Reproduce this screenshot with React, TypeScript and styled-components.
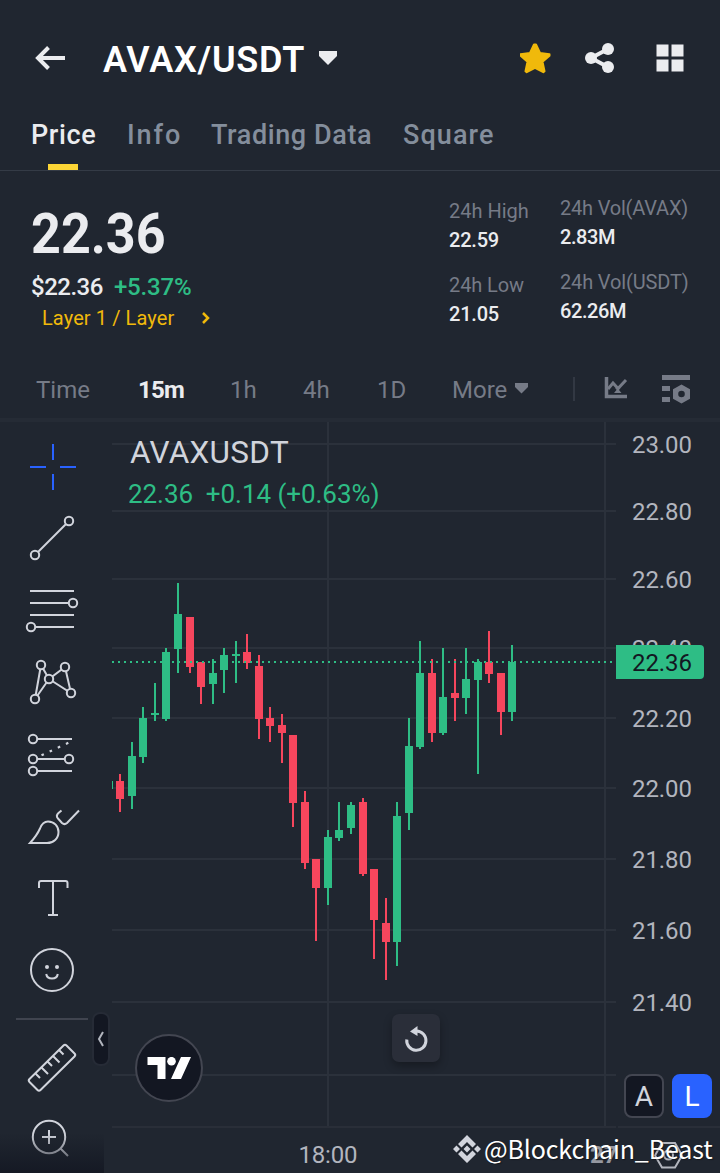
import React from "react";
import styled, { createGlobalStyle } from "styled-components";

const Global = createGlobalStyle`
  * { box-sizing: border-box; }
  body { margin: 0; background: #202630; font-family: Roboto, sans-serif; }
`;

const Page = styled.div`
  width: 720px;
  height: 1173px;
  overflow: hidden;
  background: #202630;
  display: flex;
  flex-direction: column;
  position: relative;
`;

const Label = styled.span<{ $size: number; $color?: string; $weight?: number; $track?: number; $family?: string }>`
  font-family: ${(p) => p.$family ?? "Roboto"}, sans-serif;
  font-size: ${(p) => p.$size}px;
  font-weight: ${(p) => p.$weight ?? 400};
  color: ${(p) => p.$color ?? "#ebecef"};
  letter-spacing: ${(p) => p.$track ?? 0}px;
  white-space: nowrap;
  line-height: 1.2;
`;

const LastPrice = styled(Label)`
  transform: scaleX(0.93);
  transform-origin: left;
`;

const Header = styled.header`
  height: 108px;
  padding: 8px 35px 0;
  display: flex;
  align-items: center;
`;
const Pair = styled.div`
  display: flex;
  align-items: center;
  gap: 14px;
  margin-left: 38px;
  flex: 1;
  ${Label} { padding-top: 5px; }
`;
const Actions = styled.div`
  display: flex;
  align-items: center;
  gap: 34px;
`;

const Tabs = styled.nav`
  height: 63px;
  border-bottom: 1px solid #343b46;
  padding-left: 31px;
  display: flex;
`;
const Tab = styled.div<{ $width: number; $active?: boolean }>`
  width: ${(p) => p.$width}px;
  height: 62px;
  padding-top: 11px;
  display: flex;
  flex-direction: column;
  justify-content: space-between;
  &::after {
    content: "";
    width: 30px;
    height: 6px;
    margin-left: 17px;
    background: ${(p) => (p.$active ? "#fcd535" : "transparent")};
  }
`;

const Summary = styled.section`
  height: 189px;
  padding-left: 31px;
  display: flex;
`;
const PriceBlock = styled.div`
  width: 418px;
  padding-top: 30px;
  display: flex;
  flex-direction: column;
  align-items: flex-start;
`;
const Row = styled.div<{ $gap: number; $top?: number; $left?: number }>`
  display: flex;
  align-items: center;
  gap: ${(p) => p.$gap}px;
  margin-top: ${(p) => p.$top ?? 0}px;
  margin-left: ${(p) => p.$left ?? 0}px;
`;
const StatColumn = styled.div<{ $width: number; $top: number }>`
  width: ${(p) => p.$width}px;
  padding-top: ${(p) => p.$top}px;
  display: flex;
  flex-direction: column;
  gap: 16px;
`;
const Stat = styled.div`
  height: 58px;
  display: flex;
  flex-direction: column;
  gap: 5px;
`;

const Intervals = styled.nav`
  height: 60px;
  padding-left: 36px;
  display: flex;
  align-items: center;
  border-bottom: 2px solid #252b35;
`;
const Interval = styled.div<{ $width: number }>`
  width: ${(p) => p.$width}px;
  display: flex;
  align-items: center;
  gap: 8px;
  ${Label} { padding-top: 2px; }
`;
const Divider = styled.div`
  width: 2px;
  height: 24px;
  background: #323843;
  margin-right: 29px;
`;
const IntervalIcons = styled.div`
  display: flex;
  align-items: center;
  gap: 34px;
`;

const Workspace = styled.main`
  height: 753px;
  display: flex;
  border-top: 2px solid #252b35;
`;
const Tools = styled.aside`
  width: 104px;
  height: 753px;
  padding-top: 9px;
  display: flex;
  flex-direction: column;
  position: relative;
  &::after {
    content: "";
    position: absolute;
    left: 0;
    right: 0;
    bottom: 2px;
    height: 40px;
    background: linear-gradient(rgba(19, 23, 34, 0), rgba(19, 23, 34, 0.85));
  }
`;
const ToolRule = styled.hr`
  width: 72px;
  height: 2px;
  margin: 11px 0 11px 16px;
  border: 0;
  flex: none;
  background: #40444f;
`;
const ToolIcon = styled.svg`
  display: block;
  flex: none;
  fill: none;
  stroke: #d1d4dc;
  stroke-width: 2;
`;
const ChartPane = styled.section`
  width: 616px;
  position: relative;
  svg { display: block; }
`;
const Legend = styled.div`
  position: absolute;
  left: 24px;
  top: 12px;
  display: flex;
  flex-direction: column;
  gap: 7px;
  ${Label}:first-child { padding-left: 2px; }
`;
const Collapse = styled.button`
  position: absolute;
  left: 92px;
  top: 1012px;
  width: 18px;
  height: 54px;
  padding: 0;
  border: 2px solid #262b36;
  border-radius: 8px;
  background: #131722;
  display: grid;
  place-items: center;
`;
const Brand = styled.div`
  position: absolute;
  left: 135px;
  top: 1034px;
  width: 68px;
  height: 68px;
  border: 2px solid #434651;
  border-radius: 50%;
  background: #131722;
  display: grid;
  place-items: center;
`;
const ResetButton = styled.button`
  position: absolute;
  left: 392px;
  top: 1014px;
  width: 48px;
  height: 48px;
  padding: 0;
  border: 0;
  border-radius: 7px;
  background: #2a2e39;
  box-shadow: 0 4px 8px rgba(0, 0, 0, 0.3);
  display: grid;
  place-items: center;
`;
const ScaleButtons = styled.div`
  position: absolute;
  left: 624px;
  top: 1074px;
  display: flex;
  gap: 8px;
`;
const ScaleButton = styled.button<{ $active?: boolean }>`
  width: 40px;
  height: 44px;
  padding: 0;
  border: 2px solid ${(p) => (p.$active ? "#2962ff" : "#434651")};
  border-radius: 8px;
  background: ${(p) => (p.$active ? "#2962ff" : "#131722")};
  color: ${(p) => (p.$active ? "#ffffff" : "#d1d4dc")};
  font: 400 28px Roboto, sans-serif;
`;
const Watermark = styled.div`
  position: absolute;
  left: 453px;
  top: 1133px;
  display: flex;
  align-items: center;
  gap: 3px;
  span { padding-bottom: 2px; text-shadow: 1px 1px 1px rgba(0, 0, 0, 0.4); }
`;

// left edge, wick top, wick bottom, body top, body bottom, rising
type Candle = [number, number, number, number, number, 0 | 1];
const candles: Candle[] = [
  [116, 774, 812, 781, 799, 0], [128, 742, 809, 756, 796, 1], [139, 707, 763, 718, 757, 1],
  [151, 683, 721, 713, 715, 1], [162, 648, 721, 652, 719, 1], [174, 583, 673, 614, 649, 1],
  [186, 617, 673, 617, 667, 0], [197, 662, 704, 662, 687, 0], [209, 659, 704, 673, 684, 1],
  [220, 648, 693, 655, 670, 1], [232, 641, 683, 654, 656, 1], [243, 634, 669, 652, 663, 0],
  [255, 655, 739, 666, 719, 0], [266, 707, 742, 718, 726, 0], [278, 714, 763, 725, 733, 0],
  [289, 735, 827, 735, 803, 0], [301, 791, 869, 802, 863, 0], [312, 859, 941, 859, 888, 0],
  [324, 830, 905, 837, 888, 1], [335, 802, 841, 830, 838, 1], [347, 802, 834, 805, 828, 1],
  [359, 798, 876, 802, 874, 0], [370, 869, 959, 869, 920, 0], [382, 898, 980, 923, 942, 0],
  [393, 802, 966, 816, 942, 1], [405, 718, 830, 746, 813, 1], [416, 641, 749, 673, 747, 1],
  [428, 659, 742, 673, 733, 0], [439, 648, 735, 697, 733, 1], [451, 659, 721, 693, 698, 0],
  [462, 648, 714, 679, 698, 1], [474, 659, 774, 662, 680, 1], [485, 631, 683, 662, 674, 0],
  [497, 673, 735, 673, 712, 0], [508, 645, 721, 662, 712, 1],
];
const gridRows: [number, string][] = [
  [444, "23.00"], [511, "22.80"], [579, "22.60"], [648, "22.40"], [718, "22.20"],
  [788, "22.00"], [859, "21.80"], [930, "21.60"], [1002, "21.40"], [1075, ""],
];

const Chart = () => (
  <svg width="616" height="751" viewBox="104 422 616 751" fontFamily="Roboto, sans-serif" fontSize="24">
    <g fill="#2b313b">
      {gridRows.map(([y]) => <rect key={y} x="112" y={y - 1} width="504" height="2" />)}
      <rect x="327" y="420" width="2" height="706" />
      <rect x="604" y="420" width="2" height="706" />
      <rect x="112" y="1126" width="504" height="2" fill="#292e38" />
      <rect x="618" y="1126" width="102" height="2" fill="#292e38" />
    </g>
    <rect x="112" y="781" width="1" height="8" fill="#2ebd85" />
    {candles.map(([x, wt, wb, bt, bb, up]) => (
      <g key={x} fill={up ? "#2ebd85" : "#f6465d"}>
        <rect x={x + 3} y={wt} width="2" height={wb - wt} />
        <rect x={x} y={bt} width="8" height={bb - bt} />
      </g>
    ))}
    <path d="M112 662H616" stroke="#2ebd85" strokeWidth="2" strokeDasharray="2 4" />
    <g fill="#b2b5be">
      {gridRows.map(([y, t]) => <text key={y} x="632" y={y + 9} textLength={t ? 60 : undefined}>{t}</text>)}
      <text x="298.500" y="1163" textLength="59">18:00</text>
      <text x="590" y="1163" fontWeight="700" fill="#9598a1">27</text>
    </g>
    <path d="M616 645h84a4 4 0 0 1 4 4v26a4 4 0 0 1-4 4h-84z" fill="#2ebd85" />
    <text x="632" y="671" textLength="60" fill="#131722">22.36</text>
    <g fill="none" stroke="#b2b5be" strokeWidth="2">
      <path d="M662 1143h13l7 12.500-7 12H662l-7-12z" />
      <circle cx="668.500" cy="1155" r="4.500" />
    </g>
  </svg>
);

const Rings = ({ at }: { at: [number, number][] }) => (
  <g fill="#202630">{at.map(([x, y]) => <circle key={`${x}-${y}`} cx={x} cy={y} r="4.200" />)}</g>
);

const drawingTools = [
  <path stroke="#2962ff" d="M53 13v16M53 43v16M30 36h16M60 36h16" />,
  <><path d="M35 52 69 18" /><Rings at={[[35, 52], [69, 18]]} /></>,
  <><path d="M30 16h44M30 28h44M30 40h44M30 52h44" /><Rings at={[[73, 28], [31, 52]]} /></>,
  <><path d="M35 52 41 18 49 32 65 20 71 46 49 32z" /><Rings at={[[41, 18], [65, 20], [49, 32], [35, 52], [71, 46]]} /></>,
  <>
    <path d="M33 20h39M33 40h36M33 52h39" />
    <path d="M41.500 36.300 70 23" strokeWidth="2.200" strokeDasharray="2.600 6.400" />
    <Rings at={[[33, 20], [33, 40], [69, 40], [33, 52]]} />
  </>,
  <path d="M30 52C35.500 46 38 42 40 37.500C41.500 33.500 43.500 30.500 48 30.500C54.500 30.500 58.500 35.500 58.500 41C58.500 47.500 53.500 52 47 52ZM61.500 19.500 58.500 22Q55.500 25 58 27.500L62 32Q64.500 34.200 67 32L79 19.500" />,
  <path d="M39 25v-5q0-2 2-2h24.500q2 0 2 2v5M53 18v34M48 52h10" />,
  <>
    <circle cx="52" cy="35" r="21" />
    <g fill="#d1d4dc" stroke="none"><circle cx="47" cy="32" r="2" /><circle cx="57" cy="32" r="2" /></g>
    <path d="M46.200 39c1 6 10.600 6 11.600 0" />
  </>,
];

const MUTED = "#848e9c";
const DIM = "#767b87";

export default function App() {
  return (
    <Page>
      <Global />
      <Header>
        <svg width="30" height="24" viewBox="0 0 30 24" fill="none" stroke="#ebecef" strokeWidth="4">
          <path d="M30 12H3M13.500 1.500 3 12l10.500 10.500" />
        </svg>
        <Pair>
          <Label $size={36} $weight={600} $color="#ffffff" $track={0.75}>AVAX/USDT</Label>
          <svg width="18" height="14" viewBox="0 0 18 14"><path d="M0 0h18v5L9 14 0 5z" fill="#ebecef" /></svg>
        </Pair>
        <Actions>
          <svg width="31" height="31" viewBox="0.5 0.5 31 31" fill="#f0b90b" stroke="#f0b90b" strokeWidth="2" strokeLinejoin="round">
            <path d="M14.500 2h2l4 8.500 9.500 1.200v1.500l-7 6 2 9.500-1.200 1-8.300-4.400-8.300 4.400-1.200-1 2-9.500-7-6v-1.500l9.500-1.200z" />
          </svg>
          <svg width="29" height="30" viewBox="0 0 29 30" fill="#ebecef">
            <path d="M6 15 23 6M6 15l17 9" stroke="#ebecef" strokeWidth="4" />
            <circle cx="6" cy="15" r="6" /><circle cx="23" cy="6" r="6" /><circle cx="23" cy="24" r="6" />
          </svg>
          <svg width="37" height="28" viewBox="0 0 37 28" fill="#ebecef">
            <path d="M8.500 .500h12v12H8.500zM23.500 .500h12v12H23.500zM8.500 15.500h12v12H8.500zM23.500 15.500h12v12H23.500z" />
          </svg>
        </Actions>
      </Header>

      <Tabs>
        <Tab $width={96} $active><Label $size={27} $weight={500} $track={0.6}>Price</Label></Tab>
        <Tab $width={84}><Label $size={27} $weight={500} $color={MUTED} $track={1.9}>Info</Label></Tab>
        <Tab $width={192}><Label $size={27} $weight={500} $color={MUTED} $track={0.6}>Trading Data</Label></Tab>
        <Tab $width={120}><Label $size={27} $weight={500} $color={MUTED} $track={1.1}>Square</Label></Tab>
      </Tabs>

      <Summary>
        <PriceBlock>
          <LastPrice $size={56} $weight={700} $track={0}>22.36</LastPrice>
          <Row $gap={11} $top={5}>
            <Label $size={24} $weight={500} $track={-0.5}>$22.36</Label>
            <Label $size={24} $weight={500} $color="#2ebd85" $track={-0.15}>+5.37%</Label>
          </Row>
          <Row $gap={28} $top={4} $left={11}>
            <Label $size={20} $color="#f0b90b" $track={0.1}>Layer 1 / Layer</Label>
            <svg width="8" height="12" viewBox="0 0 8 12" fill="none" stroke="#f0b90b" strokeWidth="2.500"><path d="m1 1 5 5-5 5" /></svg>
          </Row>
        </PriceBlock>
        <StatColumn $width={111} $top={28}>
          <Stat><Label $size={20} $color={DIM}>24h High</Label><Label $size={20} $weight={500} $track={-0.2}>22.59</Label></Stat>
          <Stat><Label $size={20} $color={DIM} $track={-0.1}>24h Low</Label><Label $size={20} $weight={500} $track={-0.2}>21.05</Label></Stat>
        </StatColumn>
        <StatColumn $width={150} $top={25}>
          <Stat><Label $size={20} $color={DIM} $track={-0.2}>24h Vol(AVAX)</Label><Label $size={20} $weight={500} $track={-0.4}>2.83M</Label></Stat>
          <Stat><Label $size={20} $color={DIM} $track={-0.15}>24h Vol(USDT)</Label><Label $size={20} $weight={500} $track={-0.4}>62.26M</Label></Stat>
        </StatColumn>
      </Summary>

      <Intervals>
        <Interval $width={102}><Label $size={24} $color={DIM}>Time</Label></Interval>
        <Interval $width={92}><Label $size={24} $weight={700} $track={-0.8}>15m</Label></Interval>
        <Interval $width={73}><Label $size={24} $color={DIM}>1h</Label></Interval>
        <Interval $width={74}><Label $size={24} $color={DIM}>4h</Label></Interval>
        <Interval $width={75}><Label $size={24} $color={DIM}>1D</Label></Interval>
        <Interval $width={121}>
          <Label $size={24} $color={DIM}>More</Label>
          <svg width="14" height="11" viewBox="0 0 14 11"><path d="M0 0h13v4L6.500 10.500 0 4z" fill={DIM} /></svg>
        </Interval>
        <Divider />
        <IntervalIcons>
          <svg width="24" height="24" viewBox="0 0 24 24" fill="none" stroke={DIM} strokeWidth="3.500">
            <path d="M2.500 0v19.500H23" />
            <path d="m4 12 5-6 5 5.500 8-8.500" strokeWidth="3" />
            <path d="M10 16h7.500l-2.700-3.200 1.700-1.500H11l1.700 1.500z" fill={DIM} stroke="none" />
          </svg>
          <svg width="29" height="29" viewBox="0 0 29 29" fill={DIM}>
            <path d="M0 0h28v5H0zM0 11h8v5H0zM0 22h8v5H0z" />
            <path fillRule="evenodd" d="m19.500 9.500 8.500 4.700v9.600l-8.500 4.700-8.500-4.700v-9.600zM19.500 15.700a3.300 3.300 0 1 0 0 6.600 3.300 3.300 0 0 0 0-6.600z" />
          </svg>
        </IntervalIcons>
      </Intervals>

      <Workspace>
        <Tools>
          {drawingTools.map((shape, i) => (
            <ToolIcon key={i} width="104" height="72" viewBox="0 0 104 72">{shape}</ToolIcon>
          ))}
          <ToolRule />
          <ToolIcon width="104" height="72" viewBox="0 1031 104 72" strokeLinejoin="round">
            <path d="M63.500 1045.500Q65 1044 66.500 1045.500L74.500 1053.500Q76 1055 74.500 1056.500L40.500 1090Q39 1091.500 37.500 1090L29.500 1082Q28 1080.500 29.500 1079z" />
            <path d="m59 1050 4.500 4.500M53 1056l6.500 6.500M47.500 1061.500l4.500 4.500M41.500 1067.500l6.500 6.500M35.500 1073.500l4.500 4.500" />
          </ToolIcon>
          <ToolIcon width="104" height="70" viewBox="0 1103 104 70">
            <circle cx="49" cy="1137" r="16.200" />
            <path d="M42 1137h14M49 1130v14M60.500 1148.500l7.500 7.500" />
          </ToolIcon>
        </Tools>
        <ChartPane>
          <Chart />
          <Legend>
            <Label $size={31.5} $color="#d1d4dc" $track={0.3}>AVAXUSDT</Label>
            <Label $size={26} $color="#2ebd85" $track={-0.05}>22.36&nbsp; +0.14 (+0.63%)</Label>
          </Legend>
        </ChartPane>
      </Workspace>

      <Collapse>
        <svg width="8" height="16" viewBox="0 0 8 16" fill="none" stroke="#b2b5be" strokeWidth="2"><path d="M6 1 2 8l4 7" /></svg>
      </Collapse>
      <Brand>
        <svg width="44" height="22" viewBox="0 0 44 22" fill="#ffffff">
          <path d="M.500 0h18v22h-8V8h-10zM34 0h10L34 22H24z" /><circle cx="24.500" cy="4.200" r="4.300" />
        </svg>
      </Brand>
      <ResetButton>
        <svg width="48" height="48" viewBox="0 0 48 48" fill="none" stroke="#d1d4dc" strokeWidth="3">
          <path d="M14.800 25.500A9.600 9.600 0 1 0 24.500 17" />
          <path d="m25.500 12-7.500 5.500 7.500 4.500z" fill="#d1d4dc" stroke="none" />
        </svg>
      </ResetButton>
      <ScaleButtons>
        <ScaleButton>A</ScaleButton>
        <ScaleButton $active>L</ScaleButton>
      </ScaleButtons>
      <Watermark>
        <svg width="28" height="30" viewBox="0 0 28 30" fill="#d1d4dc">
          <path d="m14 1 9 9-3.500 3.500L14 8l-5.500 5.500L5 10zM14 29l9-9-3.500-3.500L14 22l-5.500-5.500L5 20zM14 11.500l3.500 3.500-3.500 3.500-3.500-3.500zM3.500 11.500 7 15l-3.500 3.500L0 15zM24.500 11.500 28 15l-3.500 3.500L21 15z" />
        </svg>
        <Label $size={25} $color="#ffffff" $track={-0.15} $family="'Noto Sans CJK SC'">@Blockchain_Beast</Label>
      </Watermark>
    </Page>
  );
}
